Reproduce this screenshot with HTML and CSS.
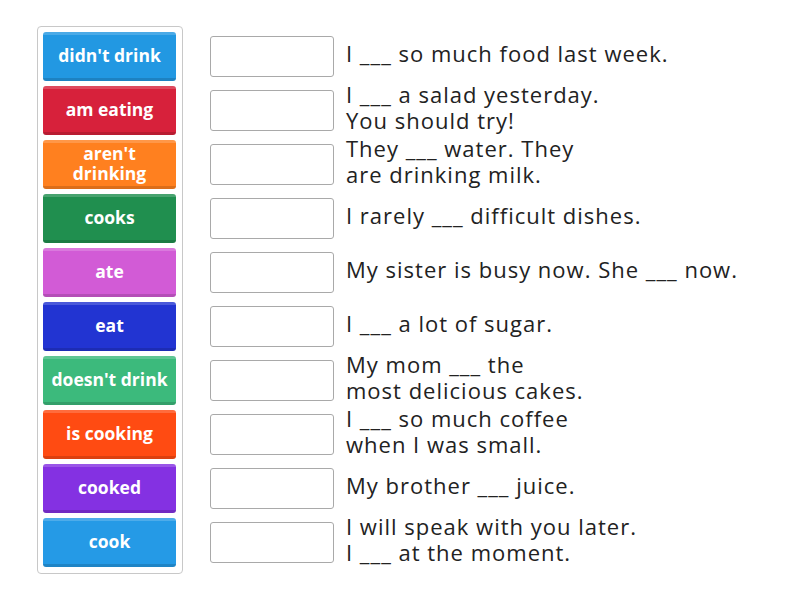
FILE: index.html
```html
<!DOCTYPE html>
<html>
<head>
<meta charset="utf-8">
<link rel="stylesheet" href="styles.css">
</head>
<body>
<div class="page">
  <div class="bank">
    <div class="tile c-blue">didn't drink</div>
    <div class="tile c-red">am eating</div>
    <div class="tile c-orange">aren't drinking</div>
    <div class="tile c-green">cooks</div>
    <div class="tile c-pink">ate</div>
    <div class="tile c-navy">eat</div>
    <div class="tile c-mint">doesn't drink</div>
    <div class="tile c-vermil">is cooking</div>
    <div class="tile c-purple">cooked</div>
    <div class="tile c-sky">cook</div>
  </div>
  <div class="rows">
    <div class="row"><div class="slot"></div><div class="sent">I ___ so much food last week.</div></div>
    <div class="row"><div class="slot"></div><div class="sent">I ___ a salad yesterday.<br>You should try!</div></div>
    <div class="row"><div class="slot"></div><div class="sent">They ___ water. They<br>are drinking milk.</div></div>
    <div class="row"><div class="slot"></div><div class="sent">I rarely ___ difficult dishes.</div></div>
    <div class="row"><div class="slot"></div><div class="sent">My sister is busy now. She ___ now.</div></div>
    <div class="row"><div class="slot"></div><div class="sent">I ___ a lot of sugar.</div></div>
    <div class="row"><div class="slot"></div><div class="sent">My mom ___ the<br>most delicious cakes.</div></div>
    <div class="row"><div class="slot"></div><div class="sent">I ___ so much coffee<br>when I was small.</div></div>
    <div class="row"><div class="slot"></div><div class="sent">My brother ___ juice.</div></div>
    <div class="row"><div class="slot"></div><div class="sent">I will speak with you later.<br>I ___ at the moment.</div></div>
  </div>
</div>
</body>
</html>
```

FILE: styles.css
```css
html, body {
  margin: 0;
  padding: 0;
  background: #ffffff;
}
body {
  font-family: "Open Sans", "Liberation Sans", sans-serif;
  color: #222;
}
.page {
  display: flex;
  align-items: flex-start;
  padding: 26px 0 0 37px;
}
.bank {
  display: flex;
  flex-direction: column;
  gap: 5px;
  padding: 5px 6px 6px 5px;
  border: 1px solid #c8c8c8;
  border-radius: 4px;
}
.tile {
  box-sizing: border-box;
  width: 133px;
  height: 49px;
  border-radius: 3px;
  display: flex;
  align-items: center;
  justify-content: center;
  text-align: center;
  color: #fff;
  font-weight: 700;
  font-size: 17.5px;
  line-height: 20px;
  padding: 0 4px 3px;
  border-top: 3px solid rgba(255,255,255,0.18);
  border-bottom: 3px solid rgba(0,0,0,0.14);
}
.c-blue { background: #2298e2; }
.c-red { background: #d7213b; }
.c-orange { background: #ff801f; }
.c-green { background: #208f4f; }
.c-pink { background: #d25bd6; }
.c-navy { background: #2234d2; }
.c-mint { background: #3cba7c; }
.c-vermil { background: #ff4b12; }
.c-purple { background: #8431e2; }
.c-sky { background: #259ae6; }
.rows {
  display: flex;
  flex-direction: column;
  gap: 5px;
  margin-left: 27px;
  padding-top: 6px;
}
.row {
  height: 49px;
  display: flex;
  align-items: center;
}
.slot {
  box-sizing: border-box;
  width: 124px;
  height: 41px;
  border: 1px solid #a9a9a9;
  border-radius: 3px;
  background: #fff;
}
.sent {
  margin-left: 12px;
  margin-top: -8px;
  font-size: 22px;
  letter-spacing: 1px;
  line-height: 26px;
  color: #222;
}
```
